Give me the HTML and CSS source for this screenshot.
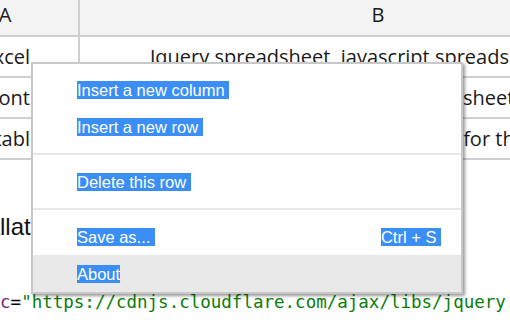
FILE: index.html
```html
<!DOCTYPE html>
<html lang="en">
<head>
  <meta charset="UTF-8">
  <title>Spreadsheet context menu</title>
  <link rel="stylesheet" href="styles.css">
</head>
<body>
<div class="page">
  <div class="sheet">
    <div class="row head">
      <div class="cell col-a">A</div>
      <div class="cell col-b">B</div>
    </div>
    <div class="row">
      <div class="cell col-a">Excel</div>
      <div class="cell col-b"><span class="pad-b">Jquery spreadsheet, javascript spreadsheet</span></div>
    </div>
    <div class="row">
      <div class="cell col-a">Front</div>
      <div class="cell col-b"><span class="pad-b">Create online tables and a spreadsheet</span></div>
    </div>
    <div class="row">
      <div class="cell col-a">Datatabl</div>
      <div class="cell col-b"><span class="pad-b">Light and fast data table grid tool for the web</span></div>
    </div>
  </div>

  <h3 class="section">Installation</h3>

  <pre class="code"><span class="attr">src</span>=<span class="str">"https://cdnjs.cloudflare.com/ajax/libs/jquery.jexcel/"</span></pre>
</div>

<!-- context menu over the sheet -->
<div class="menu">
  <div class="item"><span class="label">Insert a new column&nbsp;</span></div>
  <div class="item"><span class="label">Insert a new row&nbsp;</span></div>
  <div class="sep"></div>
  <div class="item"><span class="label">Delete this row&nbsp;</span></div>
  <div class="sep"></div>
  <div class="item"><span class="label">Save as...&nbsp;</span><span class="label">Ctrl + S&nbsp;</span></div>
  <div class="item hover"><span class="label">About</span></div>
</div>
</body>
</html>
```

FILE: styles.css
```css
body {
  margin: 0;
  padding: 0;
  background: #fff;
  overflow: hidden;
  width: 510px;
  height: 320px;
}
.page {
  width: 510px;
  overflow: hidden;
}

/*  sheet, scrolled a little to the right  */
.sheet {
  margin-left: -68px;
  width: 760px;
  font-family: "Open Sans", "Noto Sans", sans-serif;
  font-size: 20px;
  color: #1a1a1a;
}
.row {
  display: flex;
  height: 39px;
  line-height: 39px;
  border-bottom: 2px solid #cfcfcf;
}
.row.head {
  height: 35px;
  line-height: 30px;
  background: #f3f3f3;
}
.cell {
  white-space: nowrap;
  overflow: hidden;
}
.col-a {
  width: 148px;
  box-sizing: border-box;
  padding-right: 48px;
  text-align: right;
  border-right: 2px solid #cfcfcf;
}
.col-b {
  width: 598px;
  box-sizing: border-box;
  border-right: 2px solid #cfcfcf;
}
.head .cell {
  padding: 0;
  text-align: center;
}
.pad-b {
  padding-left: 70px;
}

.section {
  margin: 52px 0 0 -52px;
  font-family: "Liberation Sans", Arial, sans-serif;
  font-size: 24px;
  font-weight: normal;
  line-height: 30px;
  color: #111;
  white-space: nowrap;
}
.code {
  margin: 50px 0 0 -21px;
  font-family: "DejaVu Sans Mono", "Liberation Mono", monospace;
  font-size: 17.5px;
  line-height: 20px;
  color: #000;
  white-space: pre;
}
.code .attr {
  color: #7a1f7a;
}
.code .str {
  color: #0a7d0a;
}

/*  context menu  */
.menu {
  position: absolute;
  left: 31px;
  top: 62px;
  width: 432px;
  box-sizing: border-box;
  padding-top: 7px;
  background: #fff;
  border: 2px solid #c8c8c8;
  box-shadow: 2px 2px 3px rgba(0, 0, 0, 0.4);
  font-family: "Liberation Sans", Arial, sans-serif;
  font-size: 16.5px;
}
.item {
  display: flex;
  justify-content: space-between;
  align-items: center;
  height: 37px;
  padding: 0 20px 0 44px;
}
.item.hover {
  background: #e9e9e9;
}
.label {
  background: #3a8ef6;
  color: #fff;
  line-height: 18px;
  white-space: nowrap;
}
.sep {
  height: 2px;
  margin: 8px 0;
  background: #e8e8e8;
}
```
